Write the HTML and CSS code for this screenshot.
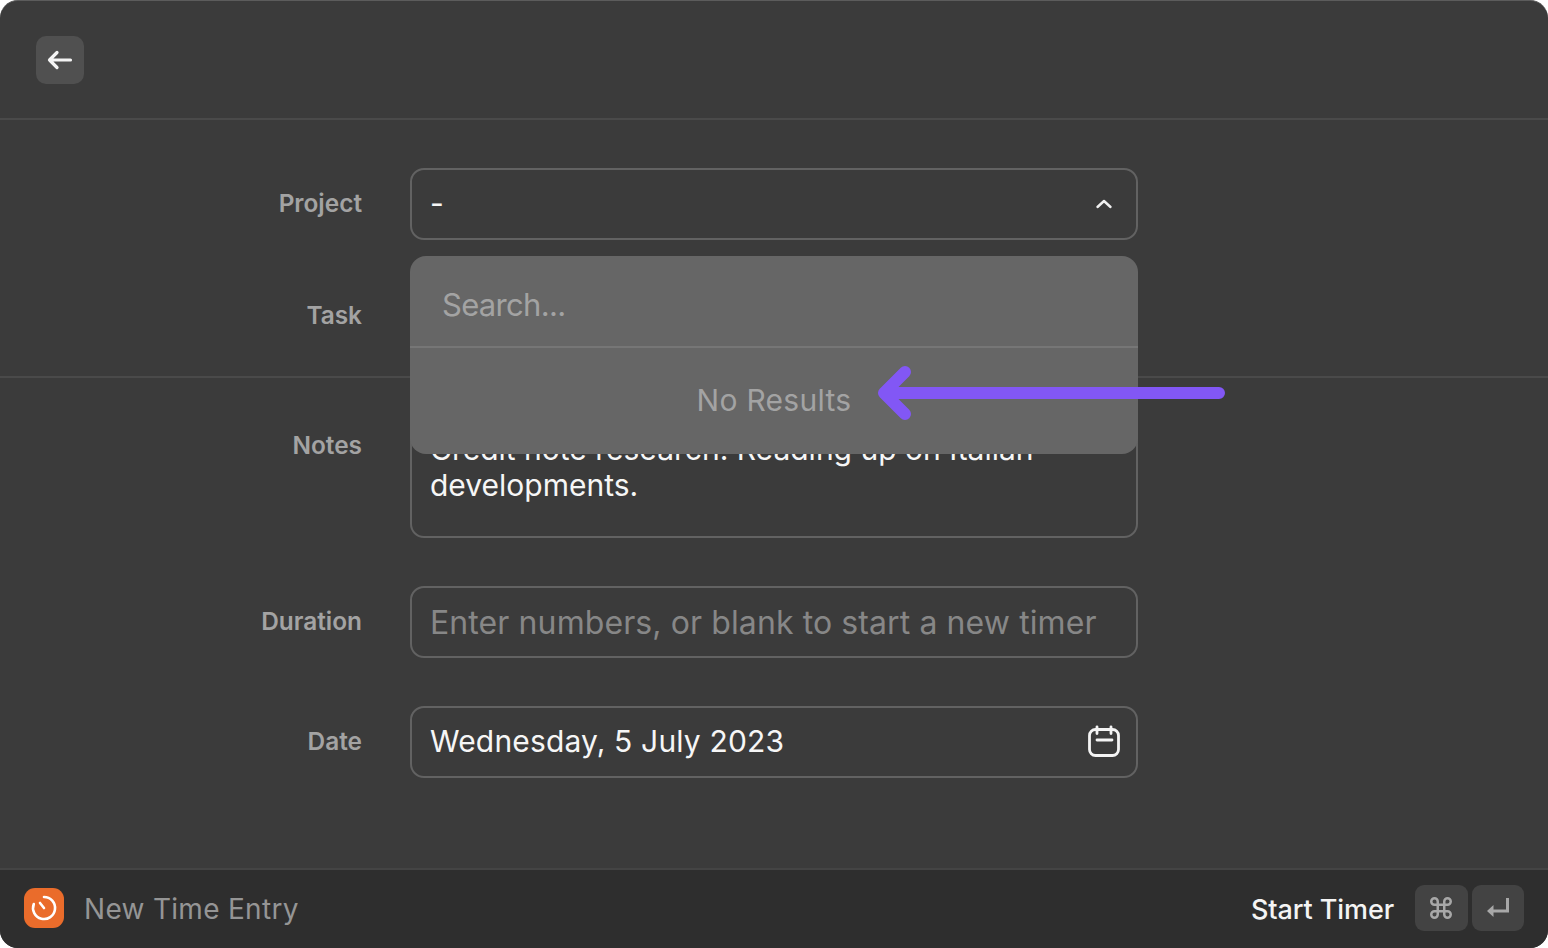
FILE: index.html
```html
<!DOCTYPE html>
<html lang="en">
<head>
<meta charset="utf-8">
<title>New Time Entry</title>
<link rel="stylesheet" href="styles.css">
</head>
<body>
<div class="window">
  <header class="topbar">
    <button class="back" aria-label="Back">
      <svg width="28" height="28" viewBox="0 0 28 28" fill="none" stroke="#f4f4f4" stroke-width="3.2" stroke-linecap="round" stroke-linejoin="round"><path d="M3.5 14H24.5M11 6.5L3.5 14L11 21.5"/></svg>
    </button>
  </header>
  <main class="content">
    <section class="group group-top">
      <div class="row">
        <div class="label">Project</div>
        <div class="field field-select">
          <span class="value">-</span>
          <svg class="chev" width="20" height="12" viewBox="0 0 20 12" fill="none" stroke="#f0f0f0" stroke-width="2.4" stroke-linecap="round" stroke-linejoin="round"><path d="M3.5 9L10 3L16.5 9"/></svg>
        </div>
      </div>
      <div class="row row-task">
        <div class="label">Task</div>
        <div class="field"></div>
      </div>
    </section>
    <section class="group group-bottom">
      <div class="row row-notes">
        <div class="label">Notes</div>
        <div class="field field-notes">Credit note research: Reading up on Italian developments.</div>
      </div>
      <div class="row">
        <div class="label">Duration</div>
        <div class="field"><span class="placeholder">Enter numbers, or blank to start a new timer</span></div>
      </div>
      <div class="row">
        <div class="label">Date</div>
        <div class="field field-select">
          <span class="value">Wednesday, 5 July 2023</span>
          <svg class="cal" width="34" height="34" viewBox="0 0 34 34" fill="none" stroke="#f4f4f4" stroke-width="2.8" stroke-linecap="round" stroke-linejoin="round"><rect x="3.5" y="4.5" width="29" height="26" rx="6"/><path d="M11 1.8V8.5M25 1.8V8.5M11 15H26"/></svg>
        </div>
      </div>
    </section>
    <div class="popover">
      <div class="search">Search...</div>
      <div class="empty">No Results</div>
    </div>
    <svg class="arrow" width="352" height="60" viewBox="0 0 352 60" fill="none" stroke="#8257f5" stroke-width="12" stroke-linecap="round" stroke-linejoin="round"><path d="M343 27H9M29 6L8 27L29 48" /></svg>
  </main>
  <footer class="footer">
    <div class="app">
      <svg class="appicon" width="40" height="40" viewBox="0 0 40 40" fill="none"><rect width="40" height="40" rx="11" fill="#ea6c2b"/><path d="M20 9A11 11 0 1 1 9.8 16" stroke="#fff" stroke-width="2.6" stroke-linecap="round"/><path d="M20 20L16 15" stroke="#fff" stroke-width="2.6" stroke-linecap="round"/></svg>
      <span class="apptitle">New Time Entry</span>
    </div>
    <div class="actions">
      <span class="actionlabel">Start Timer</span>
      <span class="key key-cmd">
        <svg width="26" height="26" viewBox="0 0 24 24" fill="none" stroke="#a8a8a8" stroke-width="2.3" stroke-linecap="round" stroke-linejoin="round"><path d="M18 3a3 3 0 0 0-3 3v12a3 3 0 0 0 3 3 3 3 0 0 0 3-3 3 3 0 0 0-3-3H6a3 3 0 0 0-3 3 3 3 0 0 0 3 3 3 3 0 0 0 3-3V6a3 3 0 0 0-3-3 3 3 0 0 0-3 3 3 3 0 0 0 3 3h12a3 3 0 0 0 3-3 3 3 0 0 0-3-3z"/></svg>
      </span>
      <span class="key">
        <svg width="26" height="22" viewBox="0 0 26 22" fill="none" stroke="#a8a8a8" stroke-width="3"><path d="M22.5 1V14H6"/><path d="M2 14L8.5 8V20Z" fill="#a8a8a8" stroke="none"/></svg>
      </span>
    </div>
  </footer>
</div>
</body>
</html>
```
FILE: styles.css
```css
* { box-sizing: border-box; }
html, body { margin: 0; height: 100%; background: #fff; }
body { font-family: Inter, "Liberation Sans", sans-serif; overflow: hidden; }
.window {
  width: 1548px; height: 948px;
  border-radius: 18px;
  overflow: hidden;
  display: flex; flex-direction: column;
  background: #3b3b3b;
  border-top: 1px solid #5c5c5c;
}
.topbar {
  height: 119px; flex: none;
  padding: 35px 36px 0;
  border-bottom: 2px solid #4a4a4a;
}
.back {
  width: 48px; height: 48px; padding: 0;
  border: 0; border-radius: 10px;
  background: #505050;
  display: flex; align-items: center; justify-content: center;
}
.content { position: relative; flex: 1; min-height: 0; }
.group { display: flex; flex-direction: column; }
.group-top { padding-top: 48px; height: 258px; gap: 40px; border-bottom: 2px solid #4a4a4a; }
.group-bottom { padding-top: 32px; gap: 48px; }
.row { display: flex; align-items: center; gap: 48px; }
.row-notes { align-items: flex-start; }
.row-notes .label { padding-top: 20px; }
.label {
  width: 362px; flex: none; text-align: right;
  font-size: 24.4px; font-weight: 600; color: #a3a3a3;
  line-height: 30px;
  padding-bottom: 3px;
}
.field {
  width: 728px; height: 72px; flex: none;
  border: 2px solid #626262; border-radius: 14px;
  padding: 0 18px 1px;
  display: flex; align-items: center;
  font-size: 30px; color: #f6f6f6;
}
.field-select { justify-content: space-between; letter-spacing: 0.16px; padding-bottom: 3px; }
.field-select svg { margin-right: -2px; }
.field-select .cal { margin-top: 3px; }
.field-select .chev { margin: 3px 4px 0 0; }
.field-notes {
  height: 128px; display: block;
  padding: 19px 18px; line-height: 36px;
}
.placeholder { display: block; margin-top: 2px; color: #878787; font-size: 32px; letter-spacing: 0.1px; }
.popover {
  position: absolute; left: 410px; top: 136px;
  width: 728px; height: 198px;
  border-radius: 16px;
  background: #666;
  font-size: 30px; color: #a3a3a3;
}
.search {
  height: 92px; padding: 6px 32px 0;
  display: flex; align-items: center;
  font-size: 31px;
  letter-spacing: -0.7px;
  border-bottom: 2px solid #767676;
}
.empty {
  height: 106px; display: flex; align-items: center; justify-content: center;
  padding-bottom: 2px;
  letter-spacing: 0.3px;
}
.arrow { position: absolute; left: 876px; top: 246px; }
.footer {
  height: 80px; flex: none;
  background: #2e2e2e;
  border-top: 2px solid #444;
  display: flex; align-items: center; justify-content: space-between;
  padding: 0 24px 2px;
}
.app { display: flex; align-items: center; gap: 20px; }
.appicon { display: block; }
.apptitle { font-size: 28px; color: #959595; letter-spacing: 0.3px; padding-top: 2px; }
.actions { display: flex; align-items: center; gap: 4px; }
.actionlabel { font-size: 27px; font-weight: 500; color: #f4f4f4; margin-right: 17px; letter-spacing: -0.1px; padding-top: 2px; }
.key {
  width: 52px; height: 46px;
  border-radius: 9px;
  background: #434343;
  display: flex; align-items: center; justify-content: center;
}
.key-cmd { width: 53px; }
.key-cmd svg { margin-right: 2px; }
```
